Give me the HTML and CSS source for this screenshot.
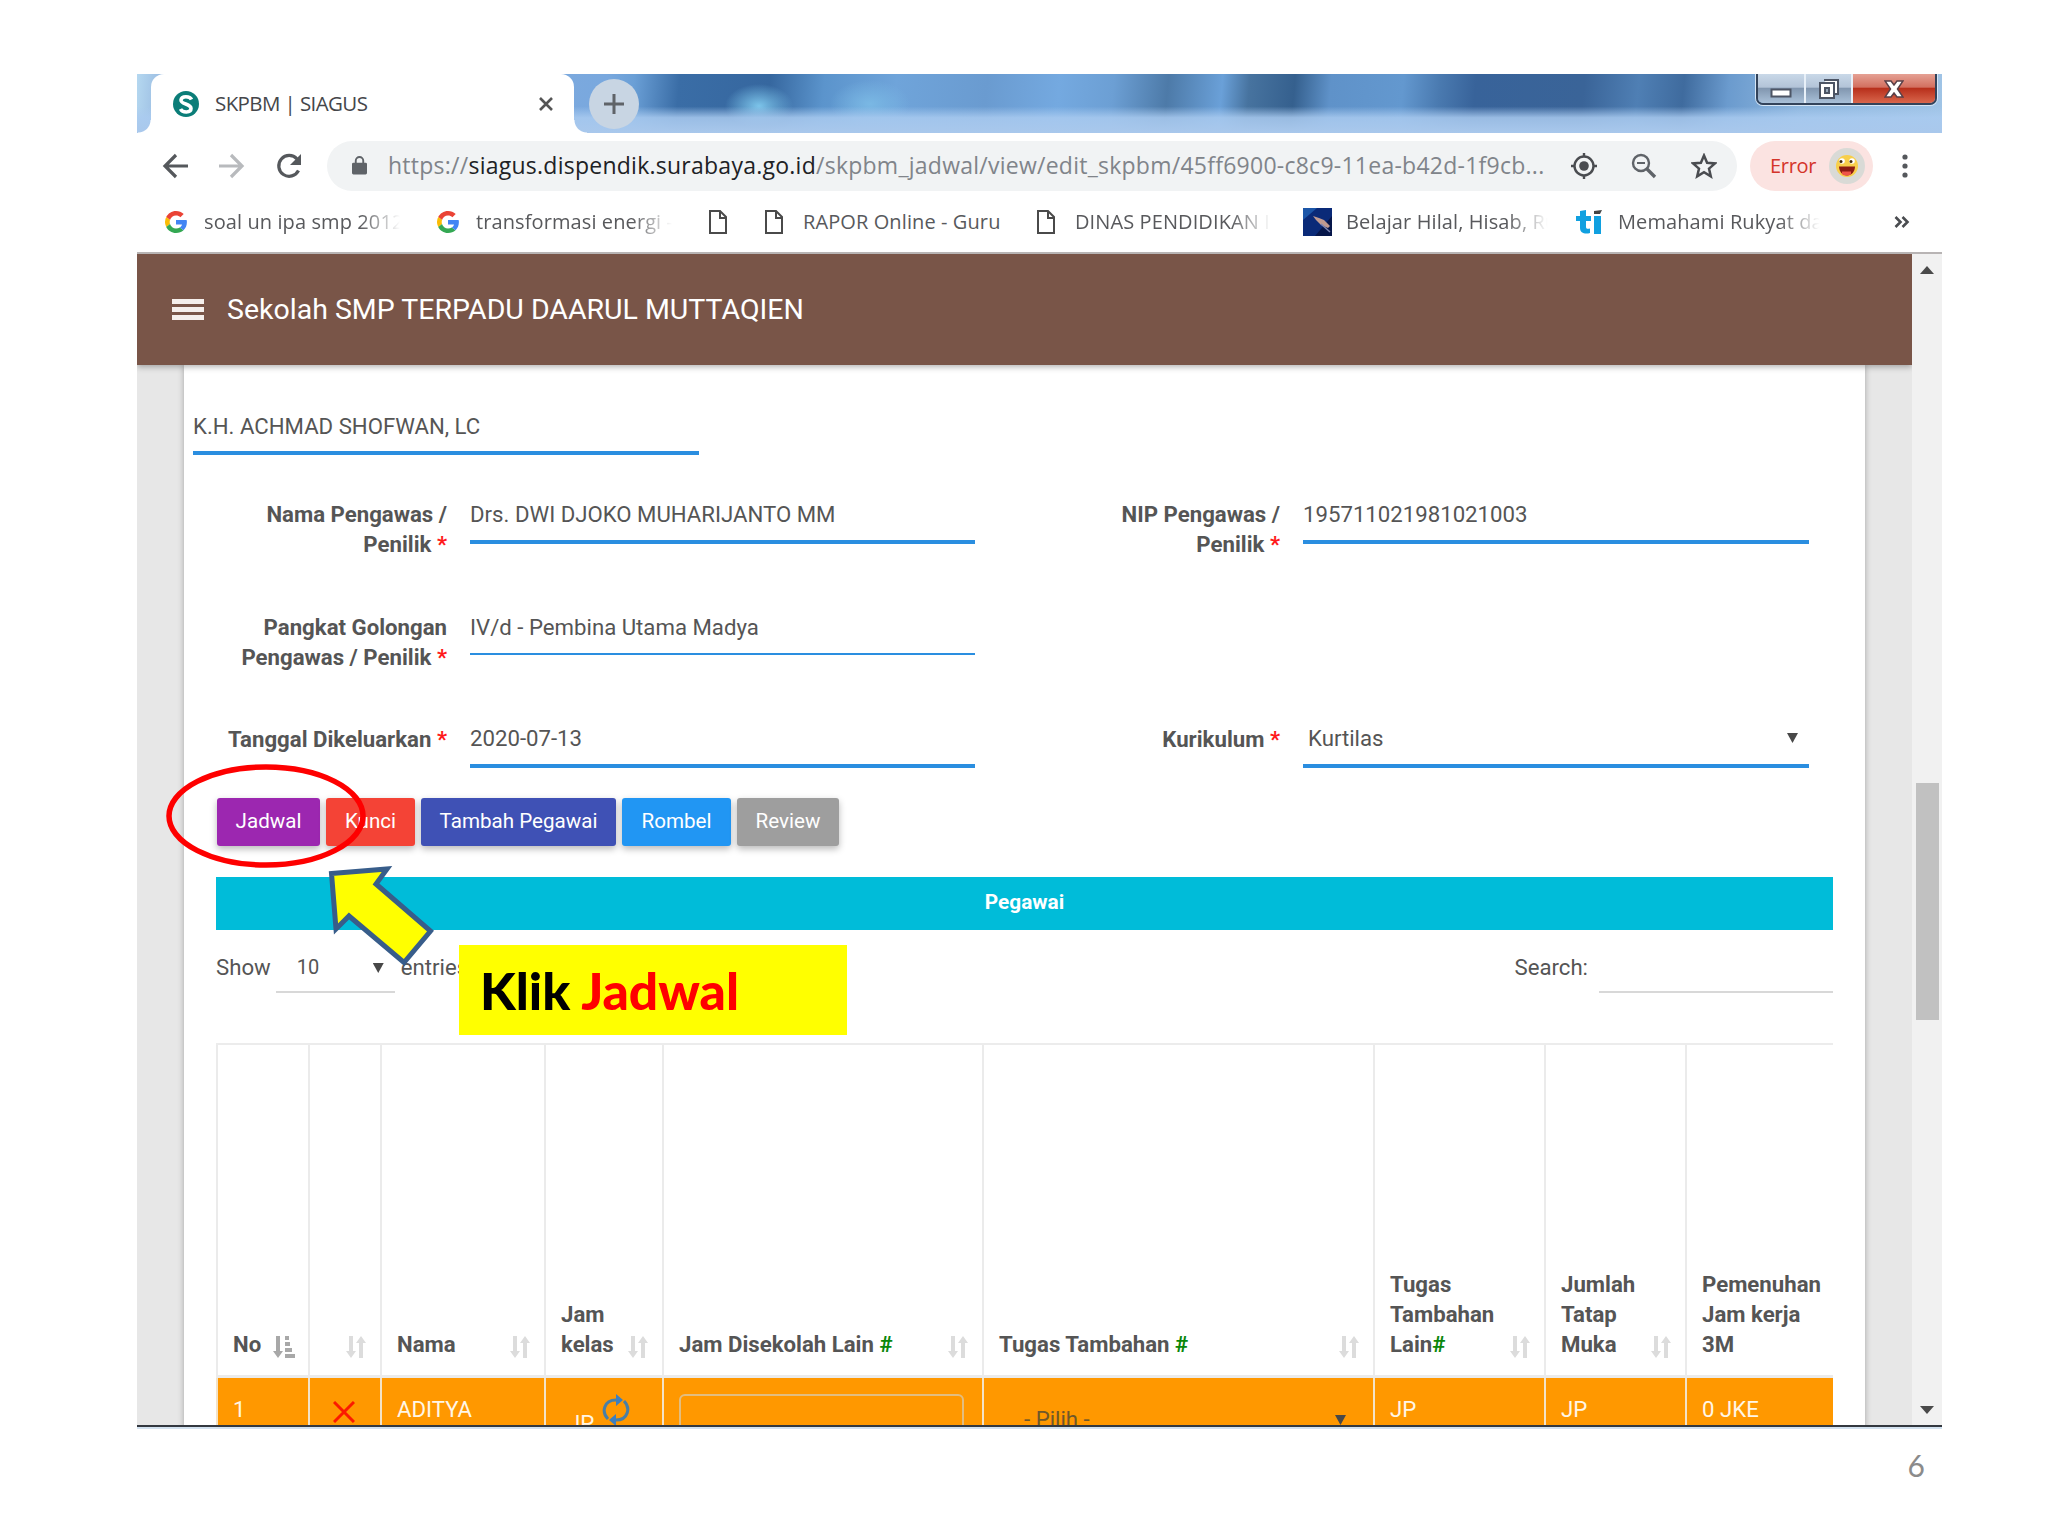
FILE: index.html
```
<!DOCTYPE html>
<html lang="id">
<head>
    <meta charset="UTF-8">
    <title>SKPBM | SIAGUS</title>
    <link rel="stylesheet" href="styles.css">
</head>
<body>
<svg class="defs" width="0" height="0">
    <symbol id="g" viewBox="0 0 24 24">
        <path fill="#ea4335" d="M12 1c3 0 5.600 1 7.700 3l-3.300 3.300C15.300 6.200 13.800 5.600 12 5.600c-2.800 0-5.200 1.900-6 4.500L2.200 7.100C4 3.500 7.700 1 12 1z"/>
        <path fill="#fbbc05" d="M2.200 7.100L6 10.100a6.600 6.600 0 0 0 0 3.900l-3.800 3a11 11 0 0 1 0-9.900z"/>
        <path fill="#34a853" d="M2.200 17L6 14c.800 2.600 3.200 4.500 6 4.500 1.500 0 2.800-.400 3.800-1.100l3.700 2.900C17.500 22 15 23 12 23c-4.300 0-8-2.500-9.800-6z"/>
        <path fill="#4285f4" d="M22.600 10H12v4.400h6c-.300 1.300-1.100 2.300-2.200 3l3.700 2.900c2.200-2 3.400-5 3.400-8.300 0-.700-.100-1.400-.300-2z"/>
    </symbol>
    <symbol id="doc" viewBox="0 0 18 24">
        <path d="M1 1h10l6 6v16H1zM11 1v7h6" fill="none" stroke="#4a4a4a" stroke-width="2"/>
    </symbol>
    <symbol id="sort" viewBox="0 0 22 24">
        <path d="M4 1h4v15h3l-5 7-5-7h3zM14 23V8h-3l5-7 5 7h-3v15z" fill="#dcdcdc"/>
    </symbol>
    <symbol id="sorted" viewBox="0 0 22 24">
        <path d="M3 1h4v15h3l-5 7-5-7h3zM12 1h4v4h-4zM12 7h5v4h-5zM12 13h7v4h-7zM12 19h10v4H12z" fill="#a8a8a8"/>
    </symbol>
</svg>

<div class="slide">
    <div class="window">

        <div class="titlebar">
            <div class="tab">
                <svg class="favicon" viewBox="0 0 26 26">
                    <circle cx="13" cy="13" r="13" fill="#0b7d78"/>
                    <path d="M18.500 8.500C17 5 8.500 4.500 8 9c-.400 4.500 10 3.500 10 8.500 0 4.500-8.500 4.500-10.500.500" fill="none" stroke="#fff" stroke-width="3.600"/>
                </svg>
                <span class="tab-title">SKPBM | SIAGUS</span>
                <svg class="tab-close" viewBox="0 0 16 16"><path d="M2 2l12 12M14 2L2 14" stroke="#555" stroke-width="2.600"/></svg>
            </div>
            <div class="new-tab"><svg viewBox="0 0 20 20"><path d="M10 0v20M0 10h20" stroke="#5f6368" stroke-width="3"/></svg></div>
            <div class="controls">
                <span class="ctl min"><svg width="22" height="10"><rect x="1.500" y="1.500" width="19" height="7" fill="#fff" stroke="#4d5565" stroke-width="2"/></svg></span>
                <span class="ctl max"><svg width="22" height="22"><path d="M6 2h14v14h-4" fill="#fff" stroke="#4d5565" stroke-width="2"/><path d="M2 5h14v15H2z" fill="#fff" stroke="#4d5565" stroke-width="2"/><path d="M7 10h4v5H7z" fill="#9ab" stroke="#4d5565" stroke-width="2"/></svg></span>
                <span class="ctl close"><svg width="20" height="18" viewBox="0 0 20 18"><path d="M1 1h6l3 4 3-4h6l-5.500 8 5.500 8h-6l-3-4-3 4H1l5.500-8z" fill="#fff" stroke="#5a4048" stroke-width="1.500"/></svg></span>
            </div>
        </div>

        <div class="toolbar">
            <div class="nav">
                <svg viewBox="0 0 26 26"><path d="M26 13H3M14 2L3 13l11 11" fill="none" stroke="#55585c" stroke-width="3.200"/></svg>
                <svg viewBox="0 0 26 26"><path d="M0 13h23M12 2l11 11-11 11" fill="none" stroke="#b8babd" stroke-width="3.200"/></svg>
                <svg viewBox="0 0 26 26"><path d="M22.500 17.500A10.400 10.400 0 1 1 21 6" fill="none" stroke="#55585c" stroke-width="3.200"/><path d="M25 1v11H14z" fill="#55585c"/></svg>
            </div>
            <div class="omnibox">
                <svg class="lock" viewBox="0 0 16 20"><path d="M4 8V5.500a4 4 0 0 1 8 0V8" fill="none" stroke="#5f6368" stroke-width="2"/><rect x="0" y="7.500" width="16" height="12.500" rx="1.500" fill="#5f6368"/></svg>
                <span class="url">https://<b>siagus.dispendik.surabaya.go.id</b>/skpbm_jadwal/view/edit_skpbm/45ff6900-c8c9-11ea-b42d-1f9cb...</span>
                <svg class="oicon" viewBox="0 0 26 26"><circle cx="13" cy="13" r="9.500" fill="none" stroke="#4a4c50" stroke-width="2.400"/><circle cx="13" cy="13" r="4.800" fill="#4a4c50"/><path d="M13 0v4M13 22v4M0 13h4M22 13h4" stroke="#4a4c50" stroke-width="2.400"/></svg>
                <svg class="oicon" viewBox="0 0 26 26"><circle cx="10" cy="10" r="8" fill="none" stroke="#5f6368" stroke-width="2.400"/><path d="M16 16l8 8" stroke="#5f6368" stroke-width="3.400"/><path d="M6 10h8" stroke="#5f6368" stroke-width="2"/></svg>
                <svg class="oicon" viewBox="0 0 26 26"><path d="M13 2.500l3.100 7.200 7.900.700-6 5.200 1.800 7.700-6.800-4.100-6.800 4.100L8 15.600l-6-5.200 7.900-.700z" fill="none" stroke="#4a4c50" stroke-width="2.500"/></svg>
            </div>
            <div class="error">
                <span>Error</span>
                <svg viewBox="0 0 36 36">
                    <circle cx="18" cy="18" r="18" fill="#d9dad6"/>
                    <circle cx="18" cy="18" r="11" fill="#f8cf4b"/>
                    <circle cx="13" cy="13" r="2.800" fill="#fff"/><circle cx="23" cy="13" r="2.800" fill="#fff"/>
                    <circle cx="12" cy="13.500" r="1.500" fill="#402a10"/><circle cx="22" cy="13.500" r="1.500" fill="#402a10"/>
                    <path d="M10 18.500h16c0 5-3.500 9-8 9s-8-4-8-9z" fill="#8c1b12"/>
                    <path d="M13 23.500h9v2.500c-2 2-7 2-9 0z" fill="#ee5548"/>
                </svg>
            </div>
            <svg class="dots" viewBox="0 0 6 24"><circle cx="3" cy="3" r="2.600"/><circle cx="3" cy="12" r="2.600"/><circle cx="3" cy="21" r="2.600"/></svg>
        </div>

        <div class="bookmarks">
            <div class="bm bm1"><svg class="ig"><use href="#g"/></svg><span class="fade">soal un ipa smp 2012</span></div>
            <div class="bm bm2"><svg class="ig"><use href="#g"/></svg><span class="fade">transformasi energi -</span></div>
            <div class="bm bm3"><svg class="idoc"><use href="#doc"/></svg></div>
            <div class="bm bm4"><svg class="idoc"><use href="#doc"/></svg><span>RAPOR Online - Guru</span></div>
            <div class="bm bm5"><svg class="idoc"><use href="#doc"/></svg><span class="fade">DINAS PENDIDIKAN I</span></div>
            <div class="bm bm6">
                <svg class="ipic" viewBox="0 0 29 28"><rect width="29" height="28" fill="#0a2a78"/><path d="M0 0h14L0 12z" fill="#1c56a8"/><path d="M29 8v20H12z" fill="#06164a"/><path d="M10 8l6 2 5 2 6 6-2 2-7-3-5-5z" fill="#c09a90"/><path d="M18 16l9 8" stroke="#7c86b4" stroke-width="1.500"/></svg>
                <span class="fade">Belajar Hilal, Hisab, Ru</span>
            </div>
            <div class="bm bm7">
                <svg class="iti" viewBox="0 0 26 24"><path d="M4 1l6-1v6h5v5h-5v6c0 2 2 2 4 1.500V23c-5 1.500-10 0-10-5v-7H0V6h4zM18 6h7v18h-7z" fill="#10a0e0"/><path d="M18 1l8-1-2 4h-6z" fill="#444"/></svg>
                <span class="fade">Memahami Rukyat da</span>
            </div>
            <svg class="more" viewBox="0 0 16 12"><path d="M1.500 1l5 5-5 5M8.500 1l5 5-5 5" fill="none" stroke="#4a4c50" stroke-width="2.600"/></svg>
        </div>

        <div class="viewport">
            <div class="page">
                <div class="appbar">
                    <div class="burger"><i></i><i></i><i></i></div>
                    <h1>Sekolah SMP TERPADU DAARUL MUTTAQIEN</h1>
                </div>
                <div class="card">
                    <div class="kepala">K.H. ACHMAD SHOFWAN, LC</div>

                    <div class="form">
                        <label>Nama Pengawas /<br>Penilik <em>*</em></label>
                        <div class="field">Drs. DWI DJOKO MUHARIJANTO MM</div>
                        <label>NIP Pengawas /<br>Penilik <em>*</em></label>
                        <div class="field">195711021981021003</div>

                        <label>Pangkat Golongan<br>Pengawas / Penilik <em>*</em></label>
                        <div class="field thin">IV/d - Pembina Utama Madya</div>
                        <span></span><span></span>

                        <label>Tanggal Dikeluarkan <em>*</em></label>
                        <div class="field date">2020-07-13</div>
                        <label>Kurikulum <em>*</em></label>
                        <div class="field date select">Kurtilas<i class="caret"></i></div>
                    </div>

                    <div class="buttons">
                        <div class="btn purple">Jadwal</div>
                        <div class="btn red">Kunci</div>
                        <div class="btn indigo">Tambah Pegawai</div>
                        <div class="btn blue">Rombel</div>
                        <div class="btn grey">Review</div>
                    </div>

                    <div class="section-title">Pegawai</div>

                    <div class="filters">
                        <span>Show</span>
                        <div class="length"><span>10</span><i class="caret"></i></div>
                        <span>entries</span>
                        <span class="search-label">Search:</span>
                        <div class="search"></div>
                    </div>

                    <div class="grid">
                        <div class="th"><span>No</span><svg><use href="#sorted"/></svg></div>
                        <div class="th"><span></span><svg><use href="#sort"/></svg></div>
                        <div class="th"><span>Nama</span><svg><use href="#sort"/></svg></div>
                        <div class="th"><span>Jam<br>kelas</span><svg><use href="#sort"/></svg></div>
                        <div class="th"><span>Jam Disekolah Lain <em>#</em></span><svg><use href="#sort"/></svg></div>
                        <div class="th"><span>Tugas Tambahan <em>#</em></span><svg><use href="#sort"/></svg></div>
                        <div class="th"><span>Tugas<br>Tambahan<br>Lain<em>#</em></span><svg><use href="#sort"/></svg></div>
                        <div class="th"><span>Jumlah<br>Tatap<br>Muka</span><svg><use href="#sort"/></svg></div>
                        <div class="th"><span>Pemenuhan<br>Jam kerja<br>3M</span></div>

                        <div class="td">1</div>
                        <div class="td del"><svg viewBox="0 0 22 22"><path d="M1 1l20 20M21 1L1 21" stroke="#fb1a00" stroke-width="3"/></svg></div>
                        <div class="td">ADITYA</div>
                        <div class="td jam"><span>JP</span>
                            <svg viewBox="0 0 28 32"><path d="M6 25C-1 18 2 6 14 6M22 7c7 7 4 19-8 19" fill="none" stroke="#4a7fa5" stroke-width="3"/><path d="M14 0l7 6-7 6zM14 20l-7 6 7 6z" fill="#3c7fc0"/></svg>
                        </div>
                        <div class="td"><div class="box"></div></div>
                        <div class="td pilih"><span>- Pilih -</span><i class="caret"></i></div>
                        <div class="td">JP</div>
                        <div class="td">JP</div>
                        <div class="td">0 JKE</div>
                    </div>
                </div>
            </div>
            <div class="scrollbar">
                <i class="up"></i>
                <div class="thumb"></div>
                <i class="down"></i>
            </div>
        </div>
        <div class="edge"></div>
    </div>

    <div class="page-number">6</div>

    <!-- annotations over the browser window -->
    <svg class="ring" viewBox="0 0 200 104"><ellipse cx="100" cy="52" rx="97" ry="49" fill="none" stroke="#fe0000" stroke-width="5.500"/></svg>
    <svg class="arrow" viewBox="0 0 110 110"><path d="M3.500 9.500L59 5 48 20 102.500 67 76 98.500 21 52 8 65z" fill="#ffff00" stroke="#385d8a" stroke-width="5"/></svg>
    <div class="callout"><span>Klik <em>Jadwal</em></span></div>
</div>
</body>
</html>
```
FILE: styles.css
```
*{
    box-sizing: border-box;
    margin: 0;
    padding: 0;
}

body{
    background: #ffffff;
    font-family: Roboto, sans-serif;
    color: #555555;
}

svg{
    display: block;
    flex: none;
}

em, i, b{
    font-style: normal;
    font-weight: inherit;
}

.defs{
    position: absolute;
}

.slide{
    position: relative;
    width: 2048px;
    height: 1536px;
    padding: 74px 106px 0 137px;
    overflow: hidden;
}

.window{
    width: 1805px;
    height: 1355px;
    display: flex;
    flex-direction: column;
    overflow: hidden;
}

/* title bar */
.titlebar{
    height: 59px;
    flex: none;
    display: flex;
    padding: 0 5px 0 14px;
    background:
        linear-gradient(to bottom, rgba(170,203,240,0) 55%, rgba(170,203,240,0.85) 74%, #a9c8ec 100%),
        radial-gradient(ellipse 34px 22px at 622px 32px, #7cc4ea, rgba(124,196,234,0)),
        radial-gradient(ellipse 40px 24px at 733px 30px, #7ab8e4, rgba(122,184,228,0)),
        linear-gradient(95deg, #b5d8f0 0, #8fb0dc 2%, #79a8de 26%, #6a9fd6 27.500%, #3a6da6 30%, #36679f 35%, #5b94cc 38%, #6fa4da 42%, #6a9bd0 47%, #74a9e0 51%, #6c9fd4 54%, #4d7aa8 57%, #6aa0d8 60%, #47739f 61.500%, #35608e 64%, #5f92c9 66%, #6398cf 70%, #4a7ab0 72%, #38639a 74%, #3a6498 80%, #4f7fb4 83%, #3f6b9e 85.500%, #6b9bce 88%, #8db6de 92%, #a0c4e6 100%);
}

.tab{
    position: relative;
    width: 423px;
    border-radius: 13px 13px 0 0;
    background: #ffffff;
    display: flex;
    align-items: center;
    padding: 1px 20px 0 22px;
}

/* curved feet of the active tab */
.tab::before, .tab::after{
    content: "";
    position: absolute;
    bottom: 0;
    width: 13px;
    height: 13px;
}

.tab::before{
    left: -13px;
    background: radial-gradient(circle at 0 0, transparent 12px, #ffffff 13px);
}

.tab::after{
    right: -13px;
    background: radial-gradient(circle at 100% 0, transparent 12px, #ffffff 13px);
}

.favicon{
    width: 26px;
    height: 26px;
}

.tab-title{
    flex: 1;
    margin: -2px 0 0 16px;
    font-family: "Open Sans", sans-serif;
    font-size: 20.5px;
    letter-spacing: -0.6px;
    color: #45464a;
    white-space: nowrap;
}

.tab-close{
    width: 16px;
    height: 16px;
}

.new-tab{
    width: 50px;
    height: 50px;
    margin: 5px 0 0 15px;
    border-radius: 50%;
    background: #c8d5e3;
    display: flex;
    align-items: center;
    justify-content: center;
}

.new-tab svg{
    width: 20px;
    height: 20px;
}

.controls{
    display: flex;
    height: 31px;
    margin-left: auto;
    border: 2px solid #33435a;
    border-top: 0;
    border-radius: 0 0 7px 7px;
    box-shadow: 0 0 0 1px #d6e6f6;
    overflow: hidden;
}

.ctl{
    display: flex;
    align-items: center;
    justify-content: center;
    background: linear-gradient(#c9d8e8 0, #b3c4d8 45%, #8297b0 50%, #a9c0d8 100%);
    border-right: 2px solid #e8f0f8;
}

.min{ width: 48px; padding-top: 8px; }
.max{ width: 47px; }
.close{
    width: 82px;
    border-right: 0;
    background: linear-gradient(#e5a194 0, #d37060 45%, #b8301c 50%, #d9664c 100%);
}

/* toolbar */
.toolbar{
    height: 66px;
    flex: none;
    display: flex;
    align-items: center;
    padding-left: 25px;
}

.nav{
    width: 165px;
    display: flex;
    gap: 31px;
}

.nav svg{
    width: 26px;
    height: 26px;
}

.omnibox{
    width: 1410px;
    height: 50px;
    border-radius: 25px;
    background: #f1f3f4;
    display: flex;
    align-items: center;
    padding-left: 25px;
}

.lock{
    width: 15px;
    height: 20px;
    margin-top: -3px;
}

.url{
    flex: none;
    width: 1183px;
    margin: -3px 0 0 21px;
    font-family: "Open Sans", sans-serif;
    font-size: 23px;
    letter-spacing: 0.25px;
    color: #80848a;
    white-space: nowrap;
}

.url b{
    color: #202124;
}

.oicon{
    width: 26px;
    height: 26px;
    margin-right: 34px;
}

.oicon:last-child{
    margin-right: 0;
}

.error{
    width: 123px;
    height: 50px;
    margin-left: 13px;
    border-radius: 25px;
    background: #fbe3e1;
    display: flex;
    align-items: center;
    padding-left: 20px;
    font-family: "Open Sans", sans-serif;
    font-size: 20px;
    letter-spacing: -0.3px;
    color: #d4342a;
}

.error span{
    margin-top: -2px;
}

.error svg{
    width: 36px;
    height: 36px;
    margin-left: auto;
    margin-right: 8px;
}

.dots{
    width: 6px;
    height: 26px;
    margin-left: 29px;
    fill: #55585c;
}

.bookmarks{
    height: 55px;
    flex: none;
    display: flex;
    align-items: center;
    padding: 0 32px 8px 27px;
    border-bottom: 2px solid #b8b4b4;
    font-family: "Open Sans", sans-serif;
    font-size: 20px;
    letter-spacing: 0.1px;
    color: #58595c;
}

.bm{
    display: flex;
    align-items: center;
    flex: none;
    white-space: nowrap;
}

.bm span{
    margin-top: -1px;
    overflow: hidden;
}

.fade{
    -webkit-mask-image: linear-gradient(to right, #000 78%, transparent 98%);
    mask-image: linear-gradient(to right, #000 78%, transparent 98%);
}

.ig{ width: 24px; height: 24px; margin-right: 16px; }
.idoc{ width: 18px; height: 24px; margin-right: 20px; }
.ipic{ width: 29px; height: 28px; margin-right: 14px; }
.iti{ width: 26px; height: 24px; margin-right: 16px; }
.bm1{ width: 272px; }
.bm2{ width: 273px; }
.bm3{ width: 56px; }
.bm4{ width: 272px; }
.bm5{ width: 266px; }
.bm6{ width: 273px; }
.bm7{ width: 250px; }
.bm1 span, .bm2 span, .bm5 span{ width: 200px; }
.bm6 span, .bm7 span{ width: 206px; }

.more{
    width: 16px;
    height: 12px;
    margin-left: auto;
}

/* page */
.viewport{
    flex: 1;
    display: flex;
    min-height: 0;
}

.page{
    width: 1775px;
    background: #e7e7e7;
    overflow: hidden;
}

.appbar{
    position: relative;
    height: 111px;
    display: flex;
    align-items: center;
    padding-left: 35px;
    background: #795548;
    box-shadow: 0 2px 6px rgba(0,0,0,0.3);
}

.burger{
    width: 32px;
    display: flex;
    flex-direction: column;
    gap: 3px;
}

.burger i{
    height: 5px;
    background: #f5efec;
}

.appbar h1{
    margin-left: 23px;
    font-size: 28.5px;
    font-weight: 400;
    color: #ffffff;
    white-space: nowrap;
}

.card{
    width: 1681px;
    height: 1100px;
    margin-left: 47px;
    padding-top: 36px;
    background: #ffffff;
    box-shadow: 0 0 6px rgba(0,0,0,0.3);
    font-size: 22.2px;
}

.kepala{
    width: 506px;
    height: 54px;
    margin-left: 9px;
    line-height: 50px;
    border-bottom: 4px solid #2a8ee0;
}

.form{
    display: grid;
    grid-template-columns: 263px 505px 328px 506px;
    grid-template-rows: 113px 112px 74px;
    padding: 44px 0 0 23px;
    line-height: 30px;
}

.form label{
    padding-right: 23px;
    text-align: right;
    font-weight: 700;
    white-space: nowrap;
}

.form label em{
    color: #ff1a1a;
}

.field{
    height: 45px;
    border-bottom: 4px solid #2a8ee0;
    white-space: nowrap;
}

.thin{
    height: 43px;
    border-bottom-width: 2px;
}

.date{
    height: 44px;
    line-height: 28px;
}

.select{
    display: flex;
    justify-content: space-between;
    padding: 0 11px 0 5px;
}

.caret{
    display: block;
    width: 11px;
    height: 10px;
    background: #484848;
    clip-path: polygon(0 0, 100% 0, 50% 100%);
}

.select .caret{
    margin-top: 9px;
}

.buttons{
    display: flex;
    gap: 6px;
    padding-left: 33px;
    font-size: 20.6px;
}

.btn{
    height: 48px;
    border-radius: 3px;
    line-height: 46px;
    text-align: center;
    color: #ffffff;
    box-shadow: 0 3px 7px rgba(0,0,0,0.28);
}

.purple{ width: 103px; background: #9c27b0; }
.red{ width: 89px; background: #f44336; }
.indigo{ width: 195px; background: #3f51b5; }
.blue{ width: 109px; background: #2196f3; }
.grey{ width: 102px; background: #9e9e9e; }

.section-title{
    width: 1617px;
    height: 53px;
    margin: 31px 0 0 32px;
    background: #00bcd9;
    line-height: 51px;
    text-align: center;
    font-size: 20.8px;
    font-weight: 700;
    color: #ffffff;
}

.filters{
    width: 1617px;
    height: 63px;
    margin-left: 32px;
    display: flex;
    line-height: 75px;
}

.length{
    width: 119px;
    margin: 0 6px 0 5px;
    display: flex;
    justify-content: space-between;
    padding: 0 11px 0 21px;
    font-size: 20px;
    border-bottom: 2px solid #d8d8d8;
}

.length .caret{
    margin-top: 33px;
}

.search-label{
    margin-left: auto;
}

.search{
    width: 234px;
    margin-left: 11px;
    border-bottom: 2px solid #d8d8d8;
}

/* table */
.grid{
    width: 1617px;
    margin: 50px 0 0 32px;
    display: grid;
    grid-template-columns: 92px 72px 164px 118px 320px 391px 171px 141px 148px;
    grid-template-rows: 333px 60px;
    border-top: 2px solid #ececec;
    line-height: 30px;
    overflow: hidden;
}

.th{
    display: flex;
    justify-content: space-between;
    align-items: flex-end;
    padding: 0 13px 16px 15px;
    border-left: 2px solid #ebebeb;
    border-bottom: 3px solid #ebebeb;
    font-weight: 700;
    white-space: nowrap;
}

.th em{
    color: #0a870a;
}

.th svg{
    width: 22px;
    height: 24px;
}

.td{
    padding: 16px 0 0 15px;
    background: #ff9800;
    border-left: 2px solid #f3e3c8;
    color: #fff6e6;
    white-space: nowrap;
}

.del svg{
    width: 22px;
    height: 22px;
    margin: 7px 0 0 8px;
}

.jam{
    display: flex;
    padding-left: 22px;
}

.jam span{
    margin-top: 14px;
}

.jam svg{
    width: 28px;
    height: 32px;
    margin-left: 8px;
}

.box{
    width: 285px;
    height: 60px;
    border: 2px solid #e2bd80;
    border-radius: 6px;
}

.pilih{
    display: flex;
    justify-content: space-between;
    padding: 26px 27px 0 40px;
    color: #70572a;
}

.pilih .caret{
    margin-top: 11px;
}

/* scrollbar */
.scrollbar{
    width: 30px;
    background: #f1f1f1;
    display: flex;
    flex-direction: column;
    align-items: center;
    padding: 12px 0 11px;
}

.thumb{
    width: 23px;
    height: 237px;
    margin-top: 509px;
    background: #c1c1c1;
}

.up, .down{
    width: 14px;
    height: 8px;
    background: #4a4a4a;
    clip-path: polygon(50% 0, 100% 100%, 0 100%);
}

.down{
    margin-top: auto;
    clip-path: polygon(0 0, 100% 0, 50% 100%);
}

.edge{
    height: 4px;
    flex: none;
    border-top: 2px solid #33383f;
    background: #d3e2f0;
}

.page-number{
    margin: 18px 17px 0 0;
    text-align: right;
    font-family: Lato, sans-serif;
    font-size: 30px;
    color: #8b8b8b;
}

/* annotations */
.ring{
    position: absolute;
    left: 166px;
    top: 764px;
    width: 200px;
    height: 104px;
}

.arrow{
    position: absolute;
    left: 328px;
    top: 864px;
    width: 110px;
    height: 110px;
}

.callout{
    position: absolute;
    left: 459px;
    top: 945px;
    width: 388px;
    height: 90px;
    padding-left: 21px;
    background: #ffff00;
    font-family: Lato, sans-serif;
    font-size: 51.5px;
    font-weight: 900;
    line-height: 91px;
    color: #000000;
    white-space: nowrap;
}

.callout em{
    color: #ff0000;
}
```
